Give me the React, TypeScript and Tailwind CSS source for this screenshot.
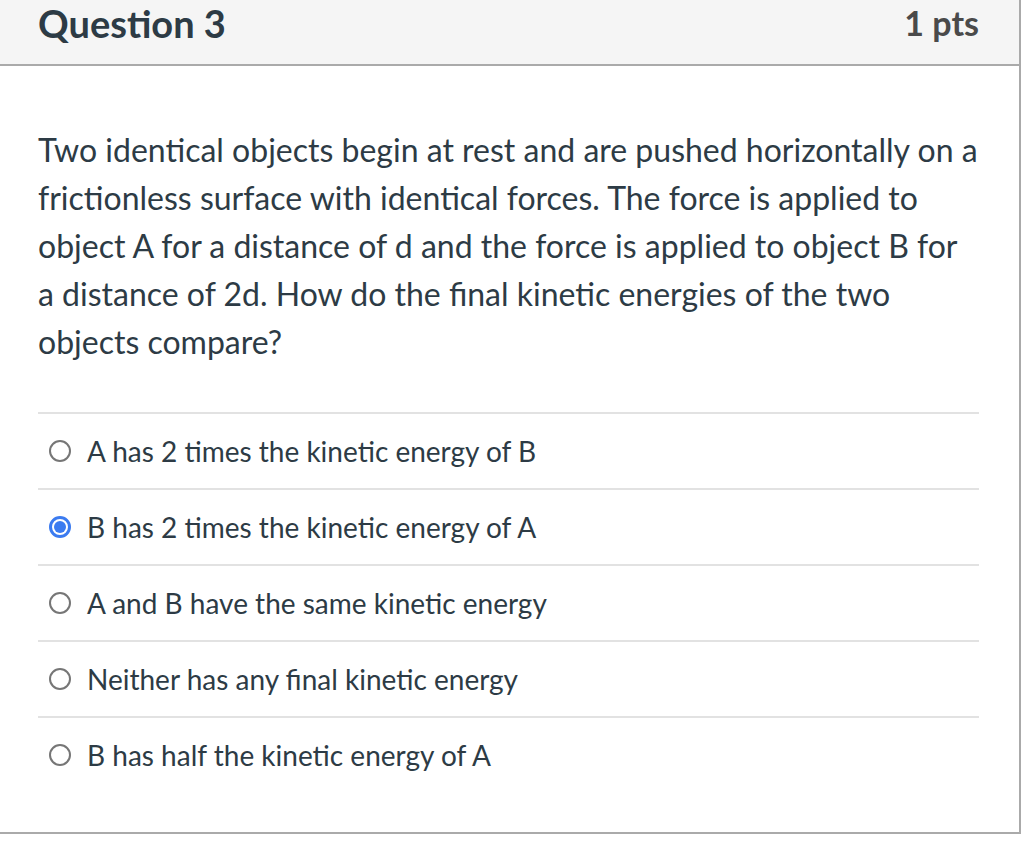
const ANSWERS = [
  { text: "A has 2 times the kinetic energy of B", checked: false },
  { text: "B has 2 times the kinetic energy of A", checked: true },
  { text: "A and B have the same kinetic energy", checked: false },
  { text: "Neither has any final kinetic energy", checked: false },
  { text: "B has half the kinetic energy of A", checked: false },
];

function Radio({ checked }: { checked: boolean }) {
  if (checked) {
    return (
      <span className="flex h-[22px] w-[22px] shrink-0 items-center justify-center rounded-full border-[3px] border-[#3b7bf0] bg-white">
        <span className="h-[12px] w-[12px] rounded-full bg-[#3b7bf0]" />
      </span>
    );
  }
  return <span className="h-[22px] w-[22px] shrink-0 rounded-full border-2 border-[#767676] bg-white" />;
}

export default function App() {
  return (
    <div className="min-h-[868px] w-[1032px] bg-white font-['Lato','Noto_Sans',sans-serif] text-[#2d3b45]">
      <div className="w-[1021px] border-r-2 border-b-2 border-[#aaaaaa]">
        {/* Header */}
        <div className="flex h-[66px] items-start justify-between border-b-2 border-[#aaaaaa] bg-[#f5f5f5] pt-[4px] pl-[38px] pr-[40px]">
          <h2 className="text-[38px] font-bold leading-[38px]">Question 3</h2>
          <span className="text-[34px] font-bold leading-[38px] text-[#4a4a4a]">1 pts</span>
        </div>

        {/* Body */}
        <div className="pt-[60px] pb-[40px] pl-[38px] pr-[40px]">
          <p className="text-[32px] leading-[48px]">
            Two identical objects begin at rest and are pushed horizontally on a frictionless surface with identical
            forces. The force is applied to object A for a distance of d and the force is applied to object B for a
            distance of 2d. How do the final kinetic energies of the two objects compare?
          </p>

          <div className="mt-[46px]">
            {ANSWERS.map(({ text, checked }) => (
              <div
                key={text}
                className="flex h-[76px] items-center gap-[16px] border-t-2 border-[#e2e2e2] pl-[11px]"
              >
                <Radio checked={checked} />
                <span className="text-[28px]">{text}</span>
              </div>
            ))}
          </div>
        </div>
      </div>
    </div>
  );
}
